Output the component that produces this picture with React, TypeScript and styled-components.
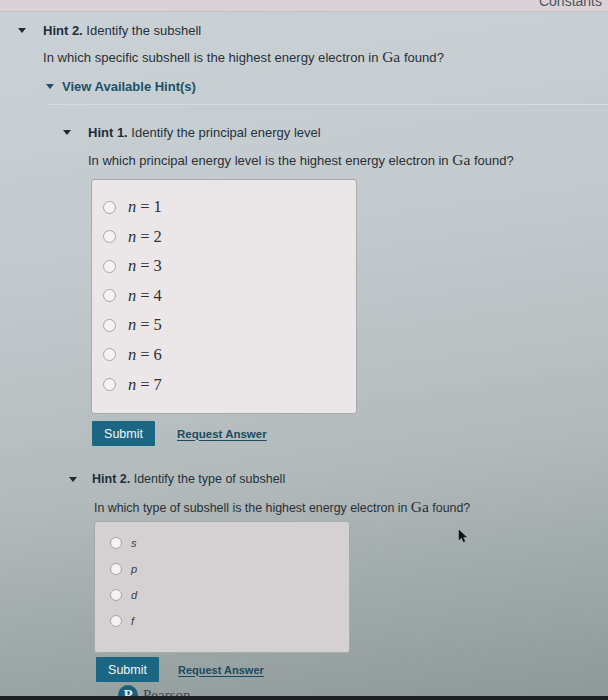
import React from "react";
import styled, { createGlobalStyle } from "styled-components";

const Global = createGlobalStyle`
  html, body { margin: 0; padding: 0; }
  body {
    width: 608px;
    height: 700px;
    overflow: hidden;
    font-family: "Liberation Sans", Arial, sans-serif;
    background: linear-gradient(172deg, #cbd2d7 0%, #c3cacd 35%, #b2babb 65%, #8e9897 100%);
  }
`;

const Screen = styled.div`
  position: relative;
  width: 608px;
  height: 700px;
  overflow: hidden;
  display: flex;
  flex-direction: column;
`;

const TopStrip = styled.div`
  flex: none;
  height: 11px;
  background: #dbd2d7;
  border-bottom: 1px solid #c2c2c9;
  display: flex;
  justify-content: flex-end;
  align-items: flex-end;
  padding-right: 6px;
  overflow: hidden;
`;

const Constants = styled.span`
  font-size: 14px;
  line-height: 14px;
  color: #4a5560;
  transform: translateY(-3px);
`;

const Body = styled.div`
  padding: 10px 0 0 18px;
  display: flex;
  flex-direction: column;
  flex: 1 1 auto;
  min-height: 0;
  overflow: hidden;
`;

const HintHeader = styled.div<{ $gap?: number; $size?: number; $shift?: number }>`
  flex: none;
  display: flex;
  align-items: center;
  gap: ${(p) => p.$gap ?? 17}px;
  margin-left: ${(p) => p.$shift ?? 0}px;
  font-size: ${(p) => p.$size ?? 13}px;
  color: #23323c;
  height: 16px;
`;

const Caret = styled.span<{ $color?: string }>`
  width: 0;
  height: 0;
  border-left: 4px solid transparent;
  border-right: 4px solid transparent;
  border-top: 5px solid ${(p) => p.$color ?? "#1f2a33"};
  flex: none;
`;

const Bold = styled.b`
  font-weight: bold;
  color: #1d2f3a;
`;

const Question = styled.p<{ $indent: number; $top: number; $size?: number }>`
  flex: none;
  margin: ${(p) => p.$top}px 0 0 ${(p) => p.$indent}px;
  font-size: ${(p) => p.$size ?? 13}px;
  line-height: 16px;
  height: 16px;
  color: #2a3036;
`;

const Ga = styled.span`
  font-family: "Liberation Serif", "Times New Roman", serif;
  font-size: 15.5px;
`;

const ViewHints = styled.div`
  flex: none;
  margin: 13px 0 0 28px;
  display: flex;
  align-items: center;
  gap: 8px;
  font-size: 13px;
  font-weight: bold;
  color: #1e4f66;
  height: 16px;
`;

const InnerPanel = styled.div`
  flex: none;
  margin: 10px 0 0 30px;
  border-top: 1px solid #d6dbdf;
  padding: 19px 0 0 15px;
  display: flex;
  flex-direction: column;
`;

const ChoiceBox = styled.div<{ $indent: number; $top: number; $w: number; $h: number; $bg: string; $gap: number; $pad: string }>`
  flex: none;
  margin: ${(p) => p.$top}px 0 0 ${(p) => p.$indent}px;
  width: ${(p) => p.$w}px;
  height: ${(p) => p.$h}px;
  box-sizing: border-box;
  background: ${(p) => p.$bg};
  border: 1px solid #a9aaab;
  border-radius: 3px;
  display: flex;
  flex-direction: column;
  gap: ${(p) => p.$gap}px;
  padding: ${(p) => p.$pad};
`;

const Option = styled.label<{ $textGap: number }>`
  display: flex;
  align-items: center;
  gap: ${(p) => p.$textGap}px;
  height: 16px;
`;

const Radio = styled.span<{ $size: number }>`
  width: ${(p) => p.$size}px;
  height: ${(p) => p.$size}px;
  border-radius: 50%;
  border: 1.5px solid #a6a6a6;
  background: #f4f2f3;
  box-sizing: border-box;
  flex: none;
`;

const MathText = styled.span`
  font-family: "Liberation Serif", "Times New Roman", serif;
  font-size: 16.5px;
  color: #2d2f33;
  i { font-style: italic; margin-right: 4px; }
  .eq { margin-right: 4px; }
`;

const SmallItalic = styled.span`
  font-family: "Liberation Sans", Arial, sans-serif;
  font-style: italic;
  font-size: 11px;
  color: #3a3d40;
`;

const Actions = styled.div<{ $indent: number; $top: number; $gap: number }>`
  flex: none;
  margin: ${(p) => p.$top}px 0 0 ${(p) => p.$indent}px;
  display: flex;
  align-items: center;
  gap: ${(p) => p.$gap}px;
`;

const SubmitButton = styled.button`
  width: 63px;
  height: 25px;
  border: none;
  border-radius: 1px;
  background: #1b6783;
  color: #f2f6f8;
  font-family: "Liberation Sans", Arial, sans-serif;
  font-size: 12.5px;
  padding: 0;
`;

const RequestLink = styled.a<{ $size: number }>`
  font-size: ${(p) => p.$size}px;
  font-weight: bold;
  color: #1c4a60;
  text-decoration: underline;
  text-underline-offset: 2px;
`;

const Spacer = styled.div<{ $h: number }>`
  flex: none;
  height: ${(p) => p.$h}px;
`;

const Footer = styled.div`
  flex: none;
  margin: 3px 0 0 100px;
  display: flex;
  align-items: center;
  gap: 5px;
  height: 20px;
`;

const Logo = styled.span`
  width: 20px;
  height: 20px;
  border-radius: 50%;
  background: #1b5f7b;
  color: #e9eef0;
  font-family: "Liberation Serif", serif;
  font-weight: bold;
  font-size: 15px;
  display: flex;
  align-items: center;
  justify-content: center;
`;

const LogoText = styled.span`
  font-family: "Liberation Serif", serif;
  font-size: 15px;
  color: #3b4650;
`;

const BottomEdge = styled.div`
  position: absolute;
  left: 0;
  right: 0;
  bottom: 0;
  height: 4px;
  background: #1c1f22;
`;

const Cursor = styled.svg`
  position: absolute;
  left: 458px;
  top: 529px;
`;

const Mathn = ({ v }: { v: number }) => (
  <MathText>
    <i>n</i>
    <span className="eq">=</span>
    {v}
  </MathText>
);

export default function App() {
  return (
    <Screen>
      <Global />
      <TopStrip>
        <Constants>Constants</Constants>
      </TopStrip>
      <Body>
        <HintHeader>
          <Caret />
          <span>
            <Bold>Hint 2.</Bold> Identify the subshell
          </span>
        </HintHeader>
        <Question $indent={25} $top={11} $size={13.1}>
          In which specific subshell is the highest energy electron in <Ga>Ga</Ga> found?
        </Question>
        <ViewHints>
          <Caret $color="#1e4f66" />
          <span>View Available Hint(s)</span>
        </ViewHints>
        <InnerPanel>
          <HintHeader>
            <Caret />
            <span>
              <Bold>Hint 1.</Bold> Identify the principal energy level
            </span>
          </HintHeader>
          <Question $indent={25} $top={12} $size={13}>
            In which principal energy level is the highest energy electron in <Ga>Ga</Ga> found?
          </Question>
          <ChoiceBox $indent={28} $top={11} $w={266} $h={235} $bg="#ebe6e8" $gap={13.6} $pad="19px 0 0 11px">
            {[1, 2, 3, 4, 5, 6, 7].map((v) => (
              <Option key={v} $textGap={12}>
                <Radio $size={13} />
                <Mathn v={v} />
              </Option>
            ))}
          </ChoiceBox>
          <Actions $indent={29} $top={7} $gap={22}>
            <SubmitButton>Submit</SubmitButton>
            <RequestLink $size={11.5}>Request Answer</RequestLink>
          </Actions>
          <Spacer $h={25} />
          <HintHeader $gap={15} $size={12.5} $shift={6}>
            <Caret />
            <span>
              <Bold>Hint 2.</Bold> Identify the type of subshell
            </span>
          </HintHeader>
          <Question $indent={31} $top={12} $size={12.4}>
            In which type of subshell is the highest energy electron in <Ga>Ga</Ga> found?
          </Question>
          <ChoiceBox $indent={31} $top={6} $w={256} $h={132} $bg="#d5d1d3" $gap={10} $pad="13px 0 0 15px">
            {["s", "p", "d", "f"].map((v) => (
              <Option key={v} $textGap={9}>
                <Radio $size={12} />
                <SmallItalic>{v}</SmallItalic>
              </Option>
            ))}
          </ChoiceBox>
          <Actions $indent={33} $top={4} $gap={19}>
            <SubmitButton>Submit</SubmitButton>
            <RequestLink $size={11}>Request Answer</RequestLink>
          </Actions>
        </InnerPanel>
        <Footer>
          <Logo>P</Logo>
          <LogoText>Pearson</LogoText>
        </Footer>
      </Body>
      <Cursor width="10" height="14" viewBox="0 0 10 14">
        <path d="M1 1 L1 11 L3.5 8.5 L5.5 13 L7 12.3 L5 8 L8.5 8 Z" fill="#111" stroke="#222" strokeWidth="0.5" />
      </Cursor>
      <BottomEdge />
    </Screen>
  );
}
